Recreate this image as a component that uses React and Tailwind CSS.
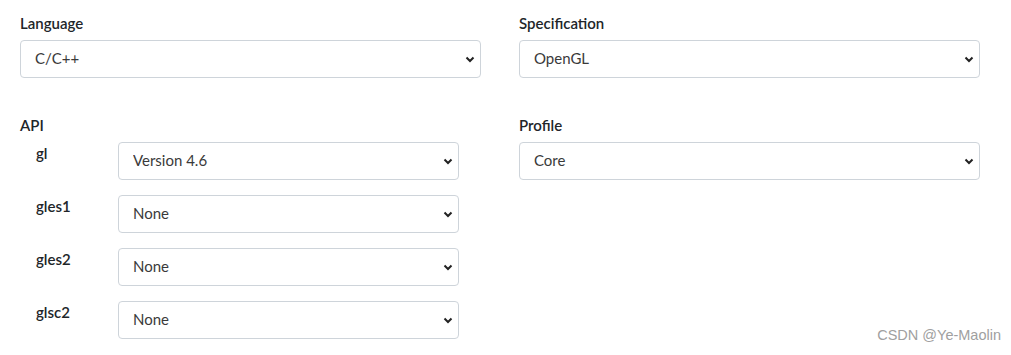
import { useState } from "react";

function Chevron() {
  return (
    <svg
      className="pointer-events-none absolute right-[6px] top-1/2 -translate-y-1/2"
      width="10"
      height="8"
      viewBox="0 0 10 8"
    >
      <path d="M1.5 2.5 L5 6 L8.5 2.5" fill="none" stroke="#222" strokeWidth="2" />
    </svg>
  );
}

function Select({ value, options, onChange, className = "" }) {
  return (
    <div className={`relative ${className}`}>
      <select
        value={value}
        onChange={(e) => onChange(e.target.value)}
        className="h-[38px] w-full appearance-none rounded-[4px] border border-[#ced4da] bg-white pb-[2px] pl-[14px] pr-6 text-[15px] text-[#3a3a3a] outline-none"
      >
        {options.map((o) => (
          <option key={o} value={o}>
            {o}
          </option>
        ))}
      </select>
      <Chevron />
    </div>
  );
}

const apis = [
  { name: "gl", options: ["None", "Version 4.6", "Version 4.5", "Version 3.3"], def: "Version 4.6" },
  { name: "gles1", options: ["None", "Version 1.0"], def: "None" },
  { name: "gles2", options: ["None", "Version 2.0", "Version 3.2"], def: "None" },
  { name: "glsc2", options: ["None", "Version 2.0"], def: "None" },
];

export default function App() {
  const [language, setLanguage] = useState("C/C++");
  const [spec, setSpec] = useState("OpenGL");
  const [profile, setProfile] = useState("Core");
  const [versions, setVersions] = useState(
    Object.fromEntries(apis.map((a) => [a.name, a.def]))
  );

  return (
    <div
      className="relative h-[355px] w-full bg-white text-[#212529]"
      style={{ fontFamily: "Lato, 'Open Sans', sans-serif" }}
    >
      <div className="flex gap-[38px] px-5 pt-3">
        {/* Left column */}
        <div className="w-[461px]">
          <label className="mb-1.5 block text-[15px] font-semibold leading-[22px]">Language</label>
          <Select value={language} options={["C/C++", "D", "Nim", "Pascal"]} onChange={setLanguage} />

          <label className="mb-1.5 mt-9 block text-[15px] font-semibold leading-[22px]">API</label>
          <div className="flex flex-col gap-[15px]">
            {apis.map((a) => (
              <div key={a.name} className="flex items-start pl-4">
                <span className="w-[82px] text-[15px] font-semibold leading-[22px]">{a.name}</span>
                <Select
                  className="w-[341px]"
                  value={versions[a.name]}
                  options={a.options}
                  onChange={(v) => setVersions({ ...versions, [a.name]: v })}
                />
              </div>
            ))}
          </div>
        </div>

        {/* Right column */}
        <div className="w-[461px]">
          <label className="mb-1.5 block text-[15px] font-semibold leading-[22px]">Specification</label>
          <Select value={spec} options={["OpenGL", "EGL", "GLX", "WGL"]} onChange={setSpec} />

          <label className="mb-1.5 mt-9 block text-[15px] font-semibold leading-[22px]">Profile</label>
          <Select value={profile} options={["Core", "Compatibility"]} onChange={setProfile} />
        </div>
      </div>

      <span
        className="absolute bottom-[8px] right-[10px] text-[14.5px] text-[#a0a0a0]"
        style={{ fontFamily: "'Liberation Sans', Arial, sans-serif" }}
      >
        CSDN @Ye-Maolin
      </span>
    </div>
  );
}
